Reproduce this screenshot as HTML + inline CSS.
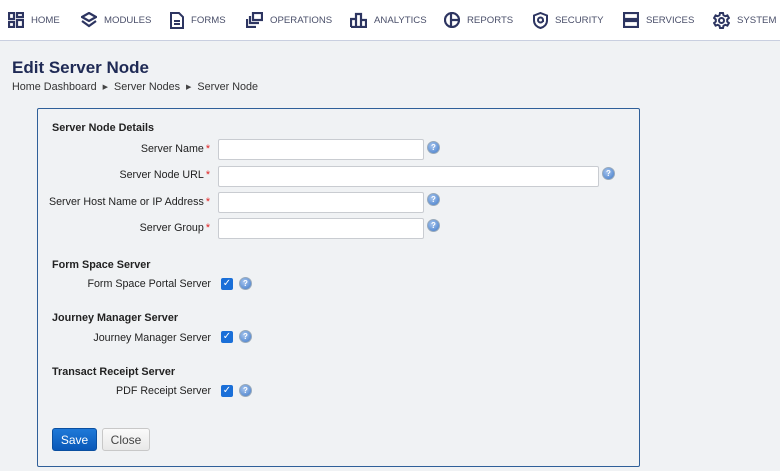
<!DOCTYPE html>
<html><head><style>
body{margin:0;width:780px;height:471px;overflow:hidden;background:#f0f2f4;font-family:"Liberation Sans",Arial,sans-serif;position:relative}
.nav{position:absolute;left:0;top:0;width:780px;height:40px;background:#fff;border-bottom:1px solid #c9cfe0}
.ni{position:absolute;top:0;height:40px;display:flex;align-items:center;font-size:9.6px;color:#4a4f6a}
.ni svg{margin-right:7px}
h1{position:absolute;left:12px;top:58px;margin:0;font-size:17px;color:#1f2a55;font-weight:bold}
.bc{position:absolute;left:12px;top:81px;font-size:10.8px;color:#333}
.bc span{font-size:7px;margin:0 6px;color:#444;vertical-align:1px}
.panel{position:absolute;left:37px;top:108px;width:601px;height:357px;border:1px solid #2f5f99;border-radius:2px;background:#f0f2f4}
.h{position:absolute;left:52px;font-size:10.8px;font-weight:bold;color:#222}
.l{position:absolute;right:570px;font-size:10.7px;color:#222;text-align:right;white-space:nowrap}
.l b{color:#e02020;font-weight:normal;margin-left:2px}
.in{position:absolute;left:218px;height:19px;background:#fff;border:1px solid #c9ccd1;border-radius:2px}
.q{position:absolute;width:13px;height:13px;border-radius:50%;background:radial-gradient(circle at 40% 35%,#a8c6ee,#3f79c9);color:#fff;font-size:8px;font-weight:bold;text-align:center;line-height:12px;border:1px solid #9ab;box-sizing:border-box}
.cb{position:absolute;left:221px;width:12px;height:12px;background:#1a6fd8;border-radius:2px;color:#fff;font-size:10px;line-height:12px;text-align:center}
.btn{position:absolute;top:428px;height:23px;border-radius:3px;font-size:12px;line-height:23px;text-align:center}
</style></head><body>
<div class="nav">
<div class="ni" style="left:8px"><svg width="16" height="16" viewBox="0 0 16 16" fill="none" stroke="#2d3561" stroke-width="2.2"><rect x="1" y="1" width="5" height="6"/><rect x="9" y="1" width="6" height="4"/><rect x="1" y="10" width="5" height="5"/><rect x="9" y="8" width="6" height="7"/></svg>HOME</div>
<div class="ni" style="left:81px"><svg width="16" height="16" viewBox="0 0 16 16" fill="none" stroke="#2d3561" stroke-width="2.2"><path d="M8 1L15 5 8 9 1 5Z"/><path d="M1 9l7 5 7-5"/></svg>MODULES</div>
<div class="ni" style="left:170px"><svg width="14" height="17" viewBox="0 0 14 17" fill="none" stroke="#2d3561" stroke-width="2"><path d="M1 1h8l4 4v11H1Z"/><path d="M4 9h6M4 12h6"/></svg>FORMS</div>
<div class="ni" style="left:246px"><svg width="17" height="16" viewBox="0 0 17 16" fill="none" stroke="#2d3561" stroke-width="2.2"><rect x="7" y="1" width="9" height="7"/><path d="M4 4v7h9M1 7v8h9"/></svg>OPERATIONS</div>
<div class="ni" style="left:350px"><svg width="17" height="16" viewBox="0 0 17 16" fill="none" stroke="#2d3561" stroke-width="2.2"><path d="M1 15V7h5v8M6 15V2h5v13M11 15V8h5v7H1"/></svg>ANALYTICS</div>
<div class="ni" style="left:444px"><svg width="16" height="16" viewBox="0 0 16 16" fill="none" stroke="#2d3561" stroke-width="2.2"><circle cx="8" cy="8" r="7"/><path d="M7 1v14M7 8h8"/></svg>REPORTS</div>
<div class="ni" style="left:533px"><svg width="15" height="17" viewBox="0 0 15 17" fill="none" stroke="#2d3561" stroke-width="2"><path d="M7.5 1L14 3.5v5c0 4-3 6.5-6.5 7.5C4 15 1 12.5 1 8.5v-5Z"/><circle cx="7.5" cy="8" r="2.5"/><path d="M10 8v2"/></svg>SECURITY</div>
<div class="ni" style="left:623px"><svg width="16" height="16" viewBox="0 0 16 16" fill="none" stroke="#2d3561" stroke-width="2.2"><rect x="1" y="1" width="14" height="6"/><rect x="1" y="9" width="14" height="6"/></svg>SERVICES</div>
<div class="ni" style="left:713px"><svg width="17" height="17" viewBox="0 0 17 17" fill="none" stroke="#2d3561" stroke-width="2"><path d="M7 1h3l.5 2.2 1.8 1 2.1-.8 1.5 2.6-1.7 1.5v2l1.7 1.5-1.5 2.6-2.1-.8-1.8 1L10 16H7l-.5-2.2-1.8-1-2.1.8L1.1 11l1.7-1.5v-2L1.1 6l1.5-2.6 2.1.8 1.8-1Z"/><circle cx="8.5" cy="8.5" r="2.5"/></svg>SYSTEM</div>
</div>
<h1>Edit Server Node</h1>
<div class="bc">Home Dashboard<span>▶</span>Server Nodes<span>▶</span>Server Node</div>
<div class="panel"></div>
<div class="h" style="top:122px">Server Node Details</div>
<div class="l" style="top:143px">Server Name<b>*</b></div>
<div class="in" style="top:139px;width:204px"></div><div class="q" style="left:427px;top:141px">?</div>
<div class="l" style="top:169px">Server Node URL<b>*</b></div>
<div class="in" style="top:166px;width:379px"></div><div class="q" style="left:602px;top:167px">?</div>
<div class="l" style="top:196px">Server Host Name or IP Address<b>*</b></div>
<div class="in" style="top:192px;width:204px"></div><div class="q" style="left:427px;top:193px">?</div>
<div class="l" style="top:222px">Server Group<b>*</b></div>
<div class="in" style="top:218px;width:204px"></div><div class="q" style="left:427px;top:219px">?</div>
<div class="h" style="top:259px">Form Space Server</div>
<div class="l" style="top:278px;right:569px">Form Space Portal Server</div>
<div class="cb" style="top:278px">✓</div><div class="q" style="left:239px;top:277px">?</div>
<div class="h" style="top:312px">Journey Manager Server</div>
<div class="l" style="top:332px;right:569px">Journey Manager Server</div>
<div class="cb" style="top:331px">✓</div><div class="q" style="left:239px;top:330px">?</div>
<div class="h" style="top:366px">Transact Receipt Server</div>
<div class="l" style="top:385px;right:569px">PDF Receipt Server</div>
<div class="cb" style="top:385px">✓</div><div class="q" style="left:239px;top:384px">?</div>
<div class="btn" style="left:52px;width:45px;background:linear-gradient(#1f79d8,#0a58b8);color:#fff;border:1px solid #0a4fa0;box-sizing:border-box">Save</div>
<div class="btn" style="left:102px;width:48px;background:linear-gradient(#fafafa,#e8e8e8);color:#444;border:1px solid #c8c8c8;box-sizing:border-box">Close</div>
</body></html>
